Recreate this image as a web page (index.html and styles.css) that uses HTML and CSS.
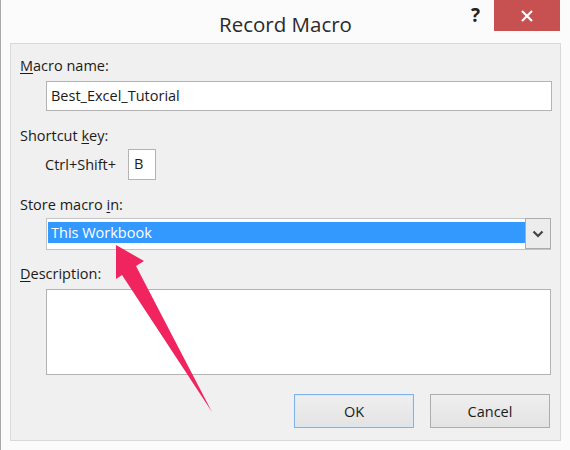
FILE: index.html
```html
<!DOCTYPE html>
<html lang="en">
<head>
    <meta charset="UTF-8">
    <title>Record Macro</title>
    <link rel="stylesheet" href="styles.css">
</head>
<body>
    <div class="window">
        <div class="titlebar">
            <div class="title">Record Macro</div>
            <div class="help">?</div>
            <div class="close">
                <svg width="14" height="14" viewBox="0 0 14 14"><path d="M2 2L12 12M12 2L2 12" stroke="#fff" stroke-width="2.2"/></svg>
            </div>
        </div>
        <div class="panel">
            <div class="label"><u>M</u>acro name:</div>
            <div class="field textbox">Best_Excel_Tutorial</div>

            <div class="label label-gap">Shortcut <u>k</u>ey:</div>
            <div class="shortcut">
                <span class="ctrl">Ctrl+Shift+</span>
                <span class="keybox">B</span>
            </div>

            <div class="label label-gap">Store macro <u>i</u>n:</div>
            <div class="field select">
                <div class="selected">This Workbook</div>
                <div class="drop">
                    <svg width="12" height="8" viewBox="0 0 12 8"><path d="M1.5 1.5L6 6L10.5 1.5" fill="none" stroke="#444" stroke-width="2.2"/></svg>
                </div>
            </div>

            <div class="label label-gap2"><u>D</u>escription:</div>
            <div class="field textarea"></div>

            <div class="actions">
                <button class="btn btn-default">OK</button>
                <button class="btn">Cancel</button>
            </div>
        </div>

        <svg class="arrow" width="570" height="450" viewBox="0 0 570 450">
            <polygon points="115,245 143,261 135,266 211,412 121,275 115,279" fill="#f0245f"/>
        </svg>
    </div>
</body>
</html>
```

FILE: styles.css
```css
body {
    margin: 0;
    font-family: "Open Sans", "Noto Sans", sans-serif;
    color: #1b1b1b;
}
.window {
    position: relative;
    width: 570px;
    height: 450px;
    box-sizing: border-box;
    background: #fbfbfb;
    border-left: 1px solid #a9a9a9;
    overflow: hidden;
}
.titlebar {
    position: relative;
    height: 43px;
}
.title {
    text-align: center;
    font-size: 20.5px;
    line-height: 28px;
    padding-top: 10px;
    color: #2a2a2a;
}
.help {
    position: absolute;
    left: 470px;
    top: 2px;
    font-size: 19px;
    font-weight: bold;
    color: #222;
}
.close {
    position: absolute;
    left: 493px;
    top: 0;
    width: 66px;
    height: 31px;
    background: #c75050;
    display: flex;
    align-items: center;
    justify-content: center;
}
.panel {
    margin-left: 9px;
    width: 551px;
    box-sizing: border-box;
    background: #f0f0f0;
    border: 1px solid #d9d9d9;
    padding: 12px 8px 12px 9px;
}
.label {
    font-size: 14.5px;
    line-height: 20px;
}
.label u {
    text-underline-offset: 2px;
}
.label-gap {
    margin-top: 15px;
}
.label-gap2 {
    margin-top: 14px;
}
.field {
    margin-left: 26px;
    box-sizing: border-box;
    background: #fff;
    border: 1px solid #b3b3b3;
}
.textbox {
    margin-top: 5px;
    height: 30px;
    font-size: 14.5px;
    line-height: 28px;
    padding-left: 4px;
}
.shortcut {
    margin-top: 3px;
    display: flex;
    align-items: center;
    font-size: 14.5px;
    line-height: 20px;
}
.ctrl {
    margin-left: 25px;
}
.keybox {
    margin-left: 12px;
    width: 28px;
    height: 31px;
    box-sizing: border-box;
    background: #fff;
    border: 1px solid #b3b3b3;
    padding-left: 5px;
    line-height: 27px;
}
.select {
    margin-top: 3px;
    margin-right: 1px;
    height: 32px;
    display: flex;
    padding: 3px 0 0 1px;
    border-color: #c4c4c4;
}
.selected {
    flex: 1;
    height: 21px;
    background: #3399ff;
    color: #fff;
    font-size: 14.5px;
    line-height: 21px;
    padding-left: 3px;
}
.drop {
    width: 26px;
    height: 31px;
    margin-top: -4px;
    margin-right: -1px;
    box-sizing: border-box;
    border: 1px solid #acacac;
    background: #ececec;
    display: flex;
    align-items: center;
    justify-content: center;
}
.textarea {
    margin-top: 5px;
    margin-right: 1px;
    height: 86px;
}
.actions {
    margin-top: 19px;
    display: flex;
    justify-content: flex-end;
    gap: 16px;
    padding-right: 2px;
}
.btn {
    width: 120px;
    height: 34px;
    font-family: "Open Sans", "Noto Sans", sans-serif;
    font-size: 14.5px;
    color: #1b1b1b;
    background: linear-gradient(#efefef, #e3e3e3);
    border: 1px solid #adadad;
    padding: 0;
}
.btn-default {
    border-color: #7eb4ea;
    box-shadow: inset 0 0 0 1px #dbe9f7;
}
.arrow {
    position: absolute;
    left: 0;
    top: 0;
    pointer-events: none;
}
```
